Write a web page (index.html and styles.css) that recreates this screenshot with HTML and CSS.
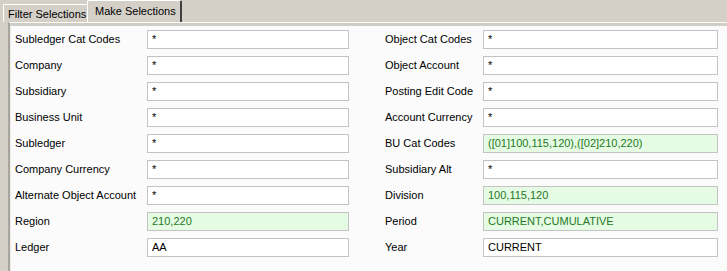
FILE: index.html
```html
<!DOCTYPE html>
<html lang="en">
<head>
  <meta charset="UTF-8" />
  <title>Make Selections</title>
  <link rel="stylesheet" href="styles.css">
</head>
<body>
  <div class="tabs">
    <div class="tab">Filter Selections</div>
    <div class="tab active">Make Selections</div>
  </div>
  <div class="panel">
    <div class="form">
      <label>Subledger Cat Codes</label><div class="field">*</div>
      <label>Object Cat Codes</label><div class="field">*</div>

      <label>Company</label><div class="field">*</div>
      <label>Object Account</label><div class="field">*</div>

      <label>Subsidiary</label><div class="field">*</div>
      <label>Posting Edit Code</label><div class="field">*</div>

      <label>Business Unit</label><div class="field">*</div>
      <label>Account Currency</label><div class="field">*</div>

      <label>Subledger</label><div class="field">*</div>
      <label>BU Cat Codes</label><div class="field set">([01]100,115,120),([02]210,220)</div>

      <label>Company Currency</label><div class="field">*</div>
      <label>Subsidiary Alt</label><div class="field">*</div>

      <label>Alternate Object Account</label><div class="field">*</div>
      <label>Division</label><div class="field set">100,115,120</div>

      <label>Region</label><div class="field set">210,220</div>
      <label>Period</label><div class="field set">CURRENT,CUMULATIVE</div>

      <label>Ledger</label><div class="field">AA</div>
      <label>Year</label><div class="field">CURRENT</div>
    </div>
  </div>
</body>
</html>
```

FILE: styles.css
```css
html, body {
  height: 100%;
}
body {
  margin: 0;
  background-color: #d4d0c8;
  font-family: "Liberation Sans", Arial, sans-serif;
  font-size: 11px;
  color: #000;
  display: flex;
  flex-direction: column;
  overflow: hidden;
}
.tabs {
  display: flex;
  align-items: flex-end;
  height: 22px;
  padding-left: 3px;
}
.tab {
  box-sizing: border-box;
  width: 85px;
  height: 18px;
  line-height: 18px;
  padding-left: 4px;
  white-space: nowrap;
  border-top: 1px solid #fff;
  border-left: 1px solid #fff;
  border-right: 1px solid #a8a59e;
  border-radius: 2px 2px 0 0;
  color: #000;
}
.tab.active {
  width: 95px;
  height: 22px;
  line-height: 20px;
  padding-left: 7px;
  border-right: 2px solid #404040;
  margin-left: -1px;
}
.panel {
  flex: 1;
  margin-left: 8px;
  border-top: 1px solid #fffbf0;
  border-left: 2px solid #a8a59e;
  background-color: #fbfbfb;
  box-shadow: inset 0 3px 0 #cfcdc8, inset 1px 0 0 #ecebe6;
}
.form {
  display: grid;
  grid-template-columns: 132px 202px 134px 235px;
  grid-auto-rows: 19px;
  row-gap: 7px;
  padding: 7px 0 0 5px;
}
.form label {
  line-height: 19px;
  white-space: nowrap;
}
.form label:nth-of-type(2n) {
  padding-left: 36px;
}
.field {
  border: 1px solid #c3c3c3;
  background-color: #fff;
  line-height: 17px;
  padding-left: 4px;
  white-space: nowrap;
  overflow: hidden;
}
.field.set {
  background-color: #e6fbe4;
  color: #1f7a1f;
}
```
